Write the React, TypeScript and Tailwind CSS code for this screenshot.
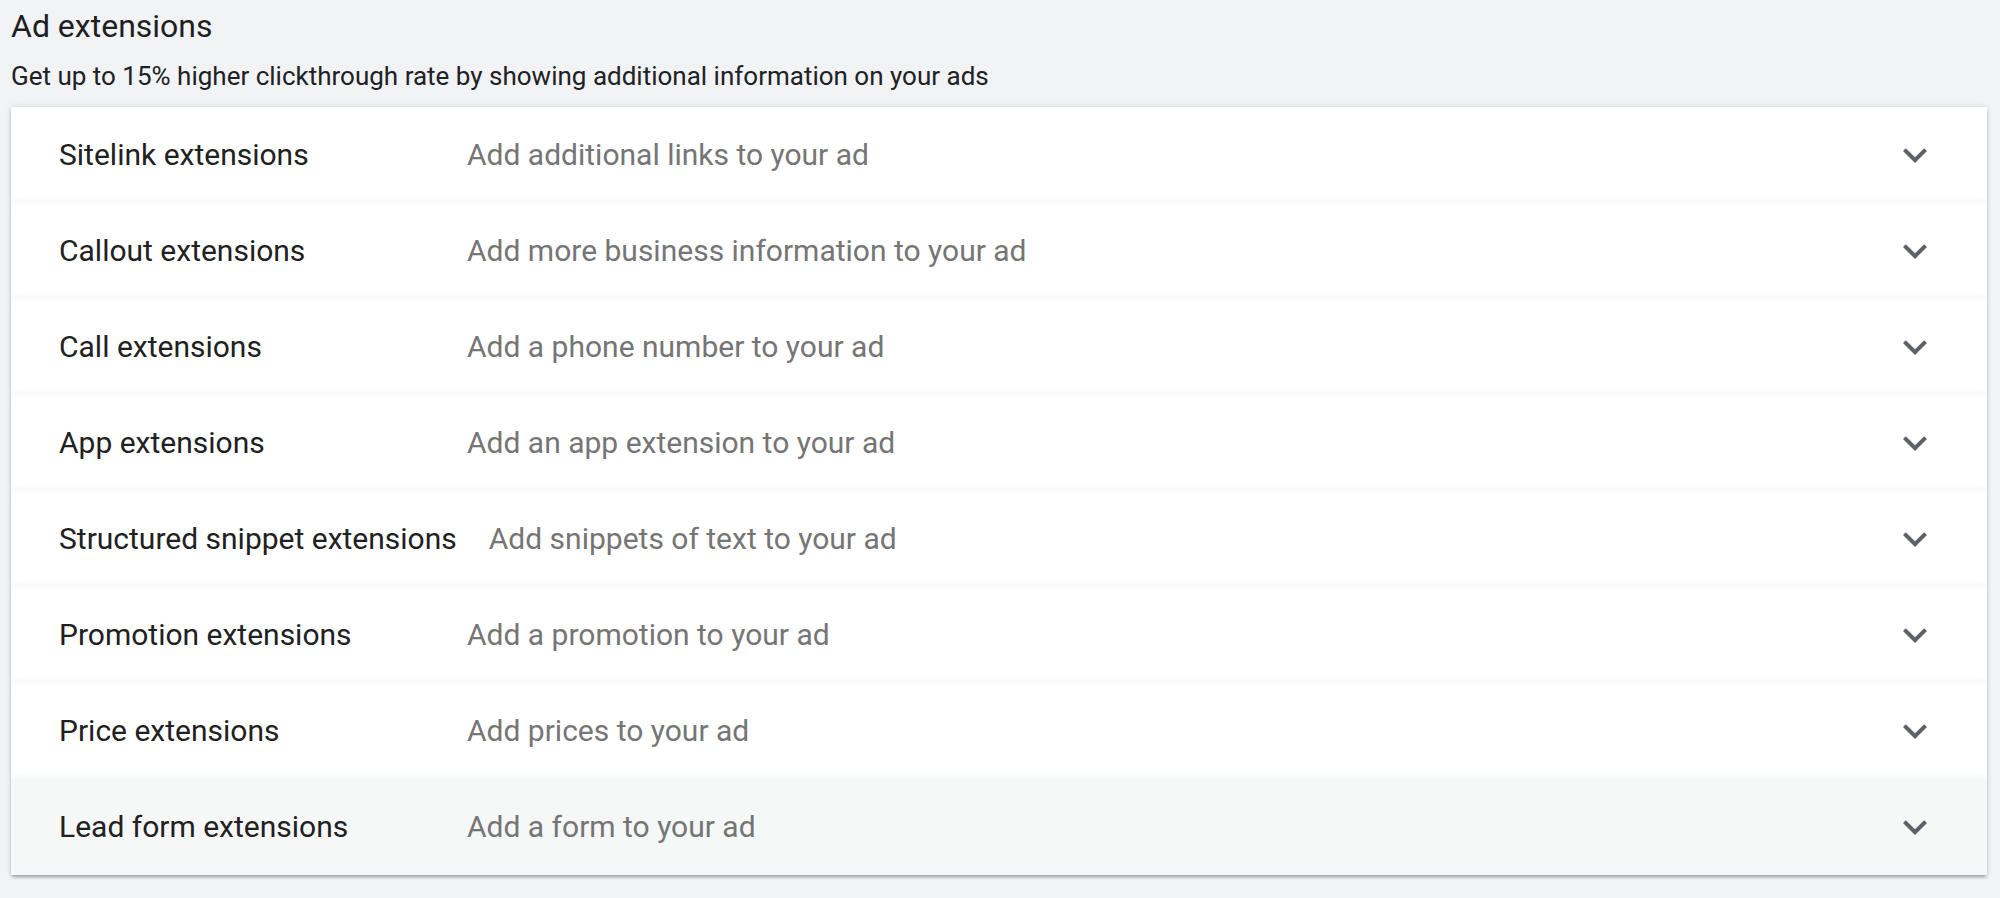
const extensions = [
  { name: "Sitelink extensions", hint: "Add additional links to your ad" },
  { name: "Callout extensions", hint: "Add more business information to your ad" },
  { name: "Call extensions", hint: "Add a phone number to your ad" },
  { name: "App extensions", hint: "Add an app extension to your ad" },
  { name: "Structured snippet extensions", hint: "Add snippets of text to your ad" },
  { name: "Promotion extensions", hint: "Add a promotion to your ad" },
  { name: "Price extensions", hint: "Add prices to your ad" },
  { name: "Lead form extensions", hint: "Add a form to your ad" },
];

function ExpandMore() {
  return (
    <svg viewBox="0 0 24 24" className="w-[48px] h-[48px] fill-[#5f6368]">
      <path d="M16.59 8.59L12 13.17 7.41 8.59 6 10l6 6 6-6z" />
    </svg>
  );
}

export default function App() {
  return (
    <div
      className="min-h-screen bg-[#f1f3f4] pl-[11px] pr-[13px] pt-[7px] pb-[24px] text-[#202124]"
      style={{ fontFamily: "Roboto, 'Noto Sans', sans-serif" }}
    >
      <h1 className="text-[32px] leading-[38px] font-normal text-[#1f1f1f]">Ad extensions</h1>
      <p className="mt-[16px] text-[26px] leading-[30px] text-[#202124]">
        Get up to 15% higher clickthrough rate by showing additional information on your ads
      </p>
      <section className="mt-[16px] bg-white shadow-[0_3px_3px_-1px_rgba(0,0,0,0.25),0_1px_4px_rgba(0,0,0,0.12)]">
        {extensions.map((ext, i) => (
          <div
            key={ext.name}
            className={
              "relative flex items-center h-[96px] pl-[48px] pr-[48px] shadow-[0_0_8px_rgba(0,0,0,0.07)] " +
              (i === extensions.length - 1 ? "bg-[#f6f7f7]" : "bg-white")
            }
          >
            <span className="mb-[2px] min-w-[408px] pr-[32px] text-[30px] text-[#212121] whitespace-nowrap">
              {ext.name}
            </span>
            <span className="mb-[2px] grow text-[30px] text-[#757575] whitespace-nowrap">{ext.hint}</span>
            <ExpandMore />
          </div>
        ))}
      </section>
    </div>
  );
}
